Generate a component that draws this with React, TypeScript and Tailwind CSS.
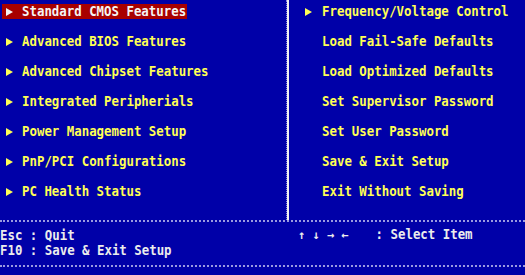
const leftItems = [
  "Standard CMOS Features",
  "Advanced BIOS Features",
  "Advanced Chipset Features",
  "Integrated Peripherials",
  "Power Management Setup",
  "PnP/PCI Configurations",
  "PC Health Status",
];

const rightItems: { label: string; arrow: boolean }[] = [
  { label: "Frequency/Voltage Control", arrow: true },
  { label: "Load Fail-Safe Defaults", arrow: false },
  { label: "Load Optimized Defaults", arrow: false },
  { label: "Set Supervisor Password", arrow: false },
  { label: "Set User Password", arrow: false },
  { label: "Save & Exit Setup", arrow: false },
  { label: "Exit Without Saving", arrow: false },
];

const Arrow = ({ color }: { color: string }) => (
  <svg width="7" height="8" viewBox="0 0 7 8" className="shrink-0">
    <polygon points="0,0 7,4 0,8" fill={color} />
  </svg>
);

const App = () => {
  return (
    <div
      className="w-[525px] h-[275px] bg-[#0000a8] overflow-hidden text-[12.4px] font-bold leading-[15px]"
      style={{ fontFamily: '"DejaVu Sans Mono", "Liberation Mono", monospace' }}
    >
      {/* Menu area */}
      <div className="flex h-[220px]">
        {/* Left column */}
        <div className="w-[286px] flex flex-col gap-[15px] pt-[4px]">
          {leftItems.map((item, i) => (
            <div
              key={item}
              className={
                i === 0
                  ? "ml-[2px] w-[185px] h-[15px] flex items-center bg-[#a80000] text-[#f4f4f4]"
                  : "ml-[2px] h-[15px] flex items-center text-[#ffff54]"
              }
            >
              <div className="w-[20px] pl-[4px] flex items-center">
                <Arrow color={i === 0 ? "#f4f4f4" : "#ffff54"} />
              </div>
              <span className="whitespace-pre inline-block scale-y-[1.1]">{item}</span>
            </div>
          ))}
        </div>

        {/* Divider */}
        <div className="w-[1px] border-l border-dotted border-[#8c8cdc]" />
        <div className="w-[2px] bg-[#f0f0f0]" />

        {/* Right column */}
        <div className="flex-1 flex flex-col gap-[15px] pt-[4px] pl-[16px]">
          {rightItems.map((item) => (
            <div key={item.label} className="h-[15px] flex items-center text-[#ffff54]">
              <div className="w-[17px] flex items-center">
                {item.arrow && <Arrow color="#ffff54" />}
              </div>
              <span className="whitespace-pre inline-block scale-y-[1.1]">{item.label}</span>
            </div>
          ))}
        </div>
      </div>

      {/* Help area */}
      <div className="border-t-2 border-b-2 border-dotted border-[#9a9ae0] h-[47px] flex text-[#ececec]">
        <div className="w-[298px] pt-[6px]">
          <div className="whitespace-pre inline-block scale-y-[1.1]">Esc : Quit</div>
          <div className="whitespace-pre scale-y-[1.1]">F10 : Save &amp; Exit Setup</div>
        </div>
        <div className="flex-1 pt-[6px] flex">
          <span className="whitespace-pre text-[12px]">{"↑ ↓ → ←"}</span>
          <span className="whitespace-pre ml-[27px] inline-block scale-y-[1.1]">: Select Item</span>
        </div>
      </div>
    </div>
  );
};

export default App;
